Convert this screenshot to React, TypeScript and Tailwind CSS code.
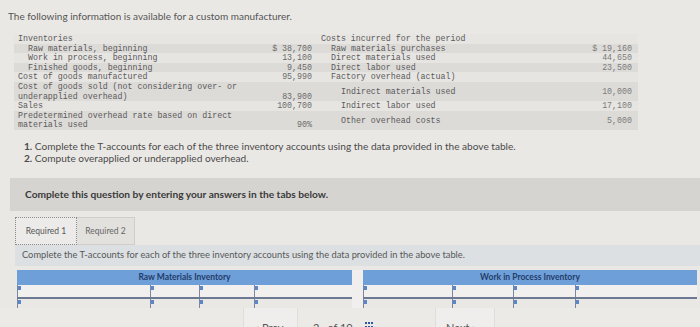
import React from "react";

const mono = "font-['Liberation_Mono','Courier_New',monospace]";

type Row = {
  a: React.ReactNode;
  b?: string;
  c?: string;
  d?: string;
  dark?: boolean;
  tall?: boolean;
  indentA?: boolean;
  indentC?: number;
};

const rows: Row[] = [
  { a: "Inventories", c: "Costs incurred for the period" },
  { a: "Raw materials, beginning", b: "$ 38,700", c: "Raw materials purchases", d: "$ 19,160", dark: true, indentA: true, indentC: 1 },
  { a: "Work in process, beginning", b: "13,100", c: "Direct materials used", d: "44,650", indentA: true, indentC: 1 },
  { a: "Finished goods, beginning", b: "9,450", c: "Direct labor used", d: "23,500", dark: true, indentA: true, indentC: 1 },
  { a: "Cost of goods manufactured", b: "95,990", c: "Factory overhead (actual)", indentC: 1 },
  {
    a: (
      <>
        Cost of goods sold (not considering over- or
        <br />
        underapplied overhead)
      </>
    ),
    b: "83,900",
    c: "Indirect materials used",
    d: "10,000",
    dark: true,
    tall: true,
    indentC: 2,
  },
  { a: "Sales", b: "100,700", c: "Indirect labor used", d: "17,100", indentC: 2 },
  {
    a: (
      <>
        Predetermined overhead rate based on direct
        <br />
        materials used
      </>
    ),
    b: "90%",
    c: "Other overhead costs",
    d: "5,000",
    dark: true,
    tall: true,
    indentC: 2,
  },
];

function DataRow({ r }: { r: Row }) {
  return (
    <div
      className={`grid grid-cols-[250px_50px_274px_50px] ${r.tall ? "h-[19.2px]" : "h-[9.6px]"} ${
        r.dark ? "bg-[#dddbd8]" : "bg-[#e7e5e2]"
      }`}
    >
      <div className={`pl-[4px] ${r.indentA ? "pl-[14px]" : ""}`}>{r.a}</div>
      <div className="flex items-end justify-end pr-[2px] text-[#6a6a6a]">{r.b}</div>
      <div
        className={`flex items-center ${
          r.indentC === 2 ? "pl-[27px]" : r.indentC === 1 ? "pl-[17px]" : "pl-[7px]"
        }`}
      >
        {r.c}
      </div>
      <div className="flex items-center justify-end pr-[6px] text-[#7a7a7a]">{r.d}</div>
    </div>
  );
}

function Mark() {
  return <span className="absolute left-0 top-[1px] h-[4px] w-[3px] bg-[#5b87c9]" />;
}

function TAccount({ title, width, cols }: { title: string; width: string; cols: string }) {
  return (
    <div className={`${width} flex flex-col`}>
      <div className="h-[15px] bg-[#6f9fd8] flex items-center justify-center text-[8.5px] font-bold text-[#1f3d6b]">
        {title}
      </div>
      <div className={`grid ${cols} h-[14px] bg-[#f1f0ee] border-b-2 border-[#6d7893]`}>
        {[0, 1, 2, 3].map((i) => (
          <div key={i} className="relative border-l-[1.5px] border-[#7b86a0]">
            <Mark />
          </div>
        ))}
      </div>
      <div className={`grid ${cols} h-[14px]`}>
        {[0, 1, 2, 3].map((i) => (
          <div key={i} className="relative border-l-[1.5px] border-[#7b86a0]">
            <Mark />
          </div>
        ))}
      </div>
    </div>
  );
}

export default function App() {
  return (
    <div className="relative w-[700px] h-[327px] overflow-hidden bg-[#eae8e5] font-['Lato','Open_Sans',sans-serif] text-[#4a4a4a]">
      <p className="pl-[8px] pt-[10px] text-[10px] leading-[12px] text-[#555]">
        The following information is available for a custom manufacturer.
      </p>

      <div className={`ml-[14px] mt-[12px] w-[624px] ${mono} text-[8.3px] leading-[9.6px] text-[#5a5a5a]`}>
        {rows.map((r, i) => (
          <DataRow key={i} r={r} />
        ))}
      </div>

      <div className="pl-[24px] mt-[10px] text-[10.1px] leading-[12px] text-[#4a4a4a]">
        <p>
          <span className="font-bold">1.</span> Complete the T-accounts for each of the three inventory accounts
          using the data provided in the above table.
        </p>
        <p>
          <span className="font-bold">2.</span> Compute overapplied or underapplied overhead.
        </p>
      </div>

      <div className="ml-[10px] mt-[14px] h-[33px] bg-[#d6d4d0] flex items-center pl-[15px] pt-[1px]">
        <span className="text-[10.2px] font-bold text-[#3a3a3a]">
          Complete this question by entering your answers in the tabs below.
        </span>
      </div>

      <div className="ml-[15px] mt-[6px] flex h-[28px]">
        <div className="w-[62px] border border-dotted border-[#8a8a8a] bg-[#ecebe9] flex items-center justify-center text-[8.5px] text-[#555]">
          Required 1
        </div>
        <div className="w-[58px] border border-[#d0cecb] border-l-0 bg-[#e3e1dd] flex items-center justify-center text-[8.5px] text-[#666]">
          Required 2
        </div>
      </div>

      <div className="ml-[15px] h-[21px] bg-[#dce0e2] flex items-center pl-[7px] text-[9.3px] text-[#585858]">
        Complete the T-accounts for each of the three inventory accounts using the data provided in the above table.
      </div>

      <div className="ml-[17px] mt-[4px] flex">
        <TAccount title="Raw Materials Inventory" width="w-[335px]" cols="grid-cols-[133px_49px_55px_98px]" />
        <div className="w-[11px] bg-[#f0efed]" />
        <TAccount title="Work in Process Inventory" width="w-[334px]" cols="grid-cols-[89px_61px_62px_122px]" />
      </div>

      <div className="absolute bottom-0 left-0 right-0 h-[19px] bg-[#eceae7] overflow-hidden">
        <div className="ml-[243px] flex h-full text-[11px] text-[#555]">
          <div className="w-[55px] h-full bg-[#efeeec] border-x border-[#e0deda] pl-[12px] pt-[12px]">
            ‹ Prev
          </div>
          <div className="w-[137px] h-full flex pl-[15px] pt-[12px] gap-[8px]">
            <span>2</span>
            <span>of 10</span>
            <span className="ml-[4px] mt-[2px] grid grid-cols-3 gap-[1px] h-[6px]">
              {Array.from({ length: 6 }).map((_, i) => (
                <span key={i} className="w-[2px] h-[2px] bg-[#2c5aa8]" />
              ))}
            </span>
          </div>
          <div className="w-[60px] h-full bg-[#efeeec] border-x border-[#e0deda] pl-[10px] pt-[12px]">
            Next ›
          </div>
        </div>
      </div>
    </div>
  );
}
